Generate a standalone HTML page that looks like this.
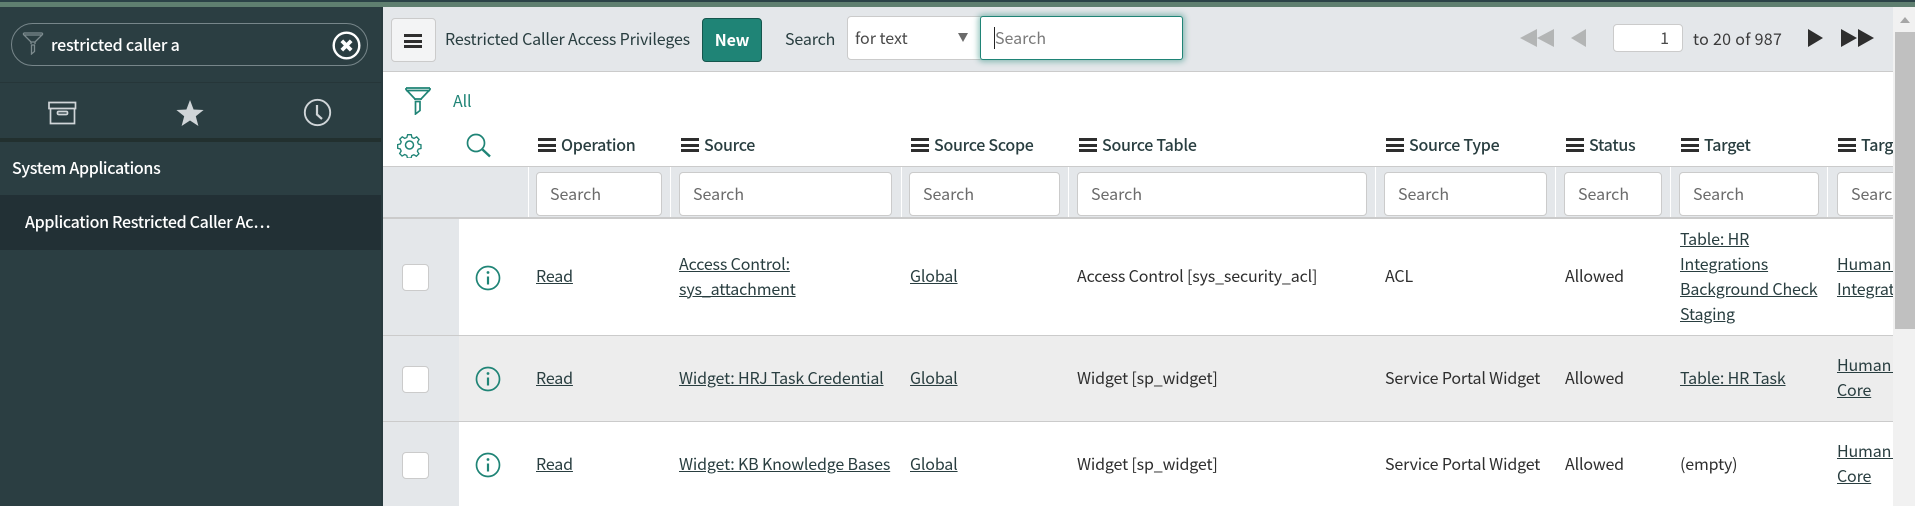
<!DOCTYPE html>
<html><head><meta charset="utf-8"><title>Restricted Caller Access Privileges</title>
<style>
html,body{margin:0;padding:0;width:1915px;height:506px;overflow:hidden;background:#fff}
body{font-family:"Noto Sans CJK JP","Liberation Sans",sans-serif;font-size:16px;color:#2e2e2e;position:relative}
div,span,a,svg{position:absolute;box-sizing:border-box}
.t{white-space:nowrap;line-height:25px;height:25px;letter-spacing:-.15px}
a.t,.t a{color:#293e40;text-decoration:underline}
.h{font-weight:500;color:#293e40;letter-spacing:-.28px}
.n{color:#fff;font-weight:500;letter-spacing:-.32px}
.i{background:#fff;border:1px solid #cbcbcb;border-radius:4px;height:44px;top:172px;color:#6b6b6b;line-height:41px;padding-left:13px;overflow:hidden;white-space:nowrap}
.sep{width:1px;background:#fff;top:167px;height:50px}
.cb{background:#fff;border:1px solid #cbcbcb;border-radius:4px;width:27px;height:27px;left:402px}
.hb{width:18px;height:14px;top:138px;border-top:3px solid #2e2e2e;border-bottom:3px solid #2e2e2e}
.hb:after{content:"";position:absolute;left:0;right:0;top:2.5px;height:3px;background:#2e2e2e}
</style></head><body>
<!-- top bar -->
<div style="left:0;top:0;width:1915px;height:2px;background:#2b4247"></div>
<div style="left:0;top:2px;width:1915px;height:5px;background:#5f7f70"></div>
<!-- nav -->
<div style="left:0;top:7px;width:383px;height:499px;background:#2b3e42"></div>
<div style="left:381px;top:7px;width:2px;height:499px;background:#283a3e"></div>
<div style="left:11px;top:23px;width:357px;height:43px;border:1px solid #77868a;border-radius:22px"></div>
<svg style="left:22px;top:31px" width="23" height="24" viewBox="0 0 23 24" fill="none" stroke="#7d8b8e" stroke-width="1.3"><path d="M1.5 2h19M1.500 2v1.500L9 11h4l7.500-7.500V2M1.500 4h19M9 11v2M13 11v2M9.500 14h3v6.500l-3 2.500z"/></svg>
<span class="t n" style="left:51px;top:32px;letter-spacing:-.2px">restricted caller a</span>
<svg style="left:332px;top:31px" width="29" height="29" viewBox="0 0 29 29" fill="none" stroke="#fff"><circle cx="14.500" cy="14.500" r="12.800" stroke-width="2.400"/><path d="M9.800 9.800l9.400 9.400M19.200 9.800l-9.400 9.400" stroke-width="3.800"/></svg>
<div style="left:0;top:82px;width:381px;height:1px;background:#263639"></div>
<svg style="left:48px;top:101px" width="29" height="24" viewBox="0 0 29 24" fill="none" stroke="#d0d5d8" stroke-width="1.700"><path d="M1 1.500h26.500v6H1zM2.500 7.500v15h24v-15"/><rect x="9.500" y="10.500" width="10" height="3" rx="1.200"/></svg>
<svg style="left:176px;top:99px" width="28" height="28" viewBox="0 0 28 28" fill="#d0d5d8"><path d="M14 1l3.600 9.500 10 .5-7.800 6.300 2.600 9.700-8.400-5.500-8.400 5.500 2.600-9.700L0.400 11l10-.5z"/></svg>
<svg style="left:303px;top:98px" width="29" height="29" viewBox="0 0 29 29" fill="none" stroke="#d0d5d8" stroke-width="1.900"><circle cx="14.500" cy="14.500" r="12.700"/><path d="M14 7v9.500l5 4.500" stroke-width="2.200"/></svg>
<div style="left:0;top:138px;width:381px;height:4px;background:#22302f"></div>
<span class="t n" style="left:12px;top:155px">System Applications</span>
<div style="left:0;top:195px;width:381px;height:55px;background:#223035"></div>
<span class="t n" style="left:25px;top:209px">Application Restricted Caller Ac…</span>
<!-- toolbar -->
<div style="left:383px;top:7px;width:1510px;height:65px;background:#e4e7ea;border-bottom:1px solid #cbcbcb"></div>
<div style="left:391px;top:18px;width:45px;height:44px;background:#f3f4f5;border:1px solid #cbcbcb;border-radius:4px"></div>
<div class="hb" style="left:404px;top:34px"></div>
<span class="t" style="left:445px;top:26px;color:#293e40">Restricted Caller Access Privileges</span>
<div style="left:702px;top:18px;width:60px;height:44px;background:#1f8476;border:1px solid #15564d;border-radius:4px;color:#fff;text-align:center;line-height:41px;font-weight:700;letter-spacing:-.2px">New</div>
<span class="t" style="left:785px;top:26px;color:#293e40">Search</span>
<div style="left:847px;top:16px;width:136px;height:44px;background:#fff;border:1px solid #cbcbcb;border-radius:4px 0 0 4px;line-height:40px;padding-left:7px;color:#4a4a4a">for text</div>
<div style="left:958px;top:33px;width:0;height:0;border-left:5.500px solid transparent;border-right:5.500px solid transparent;border-top:9px solid #6b6b6b"></div>
<div style="left:980px;top:16px;width:203px;height:44px;background:#fff;border:1px solid #1f8476;border-radius:3px;box-shadow:0 0 6px 2px rgba(31,132,118,.45);line-height:41px;padding-left:14px;color:#7a7a7a">Search</div>
<div style="left:994px;top:27px;width:1px;height:22px;background:#222"></div>
<svg style="left:1520px;top:28px" width="35" height="20" fill="#b3b5b5"><path d="M0 10L17 1v18zM17 10L34 1v18z"/></svg>
<svg style="left:1570px;top:28px" width="17" height="20" fill="#b3b5b5"><path d="M1 10L16 1v18z"/></svg>
<div style="left:1613px;top:24px;width:70px;height:28px;background:#fff;border:1px solid #cbcbcb;border-radius:4px;text-align:right;padding-right:13px;line-height:25px;color:#4a4a4a">1</div>
<span class="t" style="left:1693px;top:26px;color:#3a3a3a;letter-spacing:.3px">to 20 of 987</span>
<svg style="left:1807px;top:28px" width="17" height="20" fill="#2e2e2e"><path d="M16 10L1 1v18z"/></svg>
<svg style="left:1840px;top:28px" width="35" height="20" fill="#2e2e2e"><path d="M34 10L18 1v18zM17 10L1 1v18z"/></svg>
<!-- scrollbar -->
<div style="left:1893px;top:7px;width:22px;height:499px;background:#f1f1f1"></div>
<div style="left:1895px;top:32px;width:20px;height:297px;background:#c0c0c0"></div>
<div style="left:1900px;top:17px;width:0;height:0;border-left:5.500px solid transparent;border-right:5.500px solid transparent;border-bottom:6px solid #a6a6a6"></div>
<!-- filter row -->
<svg style="left:404px;top:86px" width="28" height="29" viewBox="0 0 28 29" fill="none" stroke="#1f8476" stroke-width="1.700"><path d="M2 2h24M2 2v1.500L11 13h6l9-9.500V2M2 4.500h24M11 13v1M17 13v1M11.500 15.500h4.500v9l-4.500 3.500z"/></svg>
<span class="t" style="left:453px;top:88px;color:#1f8476">All</span>
<svg style="left:397px;top:132px" width="25" height="26" viewBox="0 0 25 26" fill="none" stroke="#1f8476" stroke-width="1.500"><circle cx="12.500" cy="13" r="4"/><path d="M10.500 1.500h4l.8 3.200 2.300 1 2.900-1.700 2.700 2.900-1.700 2.800 1 2.300 2.800.8v4l-3 .8-1 2.300 1.700 2.900-2.800 2.700-2.800-1.700-2.300 1-.8 2.700h-4l-.8-2.900-2.300-1-2.900 1.700-2.700-2.800 1.700-2.800-1-2.300-2.900-.8v-4l3-.8 1-2.300-1.700-2.900 2.800-2.700 2.800 1.700 2.300-1z" transform="translate(1.200 1.300) scale(.9)"/></svg>
<svg style="left:466px;top:133px" width="26" height="26" viewBox="0 0 26 26" fill="none" stroke="#1f8476"><circle cx="10" cy="10" r="8.500" stroke-width="1.700"/><path d="M16.500 16.500l7.500 7" stroke-width="2.400"/></svg>
<!-- headers -->
<div class="hb" style="left:538px"></div><span class="t h" style="left:561px;top:132px">Operation</span>
<div class="hb" style="left:681px"></div><span class="t h" style="left:704px;top:132px">Source</span>
<div class="hb" style="left:911px"></div><span class="t h" style="left:934px;top:132px">Source Scope</span>
<div class="hb" style="left:1079px"></div><span class="t h" style="left:1102px;top:132px">Source Table</span>
<div class="hb" style="left:1386px"></div><span class="t h" style="left:1409px;top:132px">Source Type</span>
<div class="hb" style="left:1566px"></div><span class="t h" style="left:1589px;top:132px">Status</span>
<div class="hb" style="left:1681px"></div><span class="t h" style="left:1704px;top:132px">Target</span>
<div style="left:1838px;top:125px;width:55px;height:40px;overflow:hidden"><div class="hb" style="left:0;top:13px"></div><span class="t h" style="left:23px;top:7px">Target</span></div>
<!-- search row -->
<div style="left:383px;top:166px;width:1510px;height:53px;background:#e4e7ea;border-top:1px solid #cbcbcb;border-bottom:2px solid #cbcbcb"></div>
<div class="sep" style="left:528px"></div><div class="sep" style="left:670px"></div><div class="sep" style="left:901px"></div><div class="sep" style="left:1068px"></div><div class="sep" style="left:1375px"></div><div class="sep" style="left:1555px"></div><div class="sep" style="left:1670px"></div><div class="sep" style="left:1827px"></div>
<div class="i" style="left:536px;width:126px">Search</div>
<div class="i" style="left:679px;width:213px">Search</div>
<div class="i" style="left:909px;width:151px">Search</div>
<div class="i" style="left:1077px;width:290px">Search</div>
<div class="i" style="left:1384px;width:163px">Search</div>
<div class="i" style="left:1564px;width:98px">Search</div>
<div class="i" style="left:1679px;width:140px">Search</div>
<div class="i" style="left:1837px;width:70px">Search</div>
<div style="left:1893px;top:166px;width:2px;height:53px;background:#f1f1f1"></div>
<div style="left:1895px;top:166px;width:20px;height:53px;background:#c0c0c0"></div>
<!-- rows -->
<div style="left:383px;top:219px;width:76px;height:287px;background:#e4e7ea"></div>
<div style="left:459px;top:336px;width:1434px;height:85px;background:#ededed"></div>
<div style="left:383px;top:335px;width:1510px;height:1px;background:#cbcbcb"></div>
<div style="left:383px;top:421px;width:1510px;height:1px;background:#cbcbcb"></div>
<div class="cb" style="top:264px"></div><div class="cb" style="top:366px"></div><div class="cb" style="top:452px"></div>
<svg style="left:475px;top:265px" width="26" height="26" viewBox="0 0 26 26" fill="none" stroke="#1f8476"><circle cx="13" cy="13" r="11.500" stroke-width="1.700"/><path d="M13 11.500v8" stroke-width="2.200"/><circle cx="13" cy="7.500" r="1.400" fill="#1f8476" stroke="none"/></svg>
<svg style="left:475px;top:366px" width="26" height="26" viewBox="0 0 26 26" fill="none" stroke="#1f8476"><circle cx="13" cy="13" r="11.500" stroke-width="1.700"/><path d="M13 11.500v8" stroke-width="2.200"/><circle cx="13" cy="7.500" r="1.400" fill="#1f8476" stroke="none"/></svg>
<svg style="left:475px;top:452px" width="26" height="26" viewBox="0 0 26 26" fill="none" stroke="#1f8476"><circle cx="13" cy="13" r="11.500" stroke-width="1.700"/><path d="M13 11.500v8" stroke-width="2.200"/><circle cx="13" cy="7.500" r="1.400" fill="#1f8476" stroke="none"/></svg>
<a class="t" style="left:536px;top:263px">Read</a>
<a class="t" style="left:679px;top:251px">Access Control:</a>
<a class="t" style="left:679px;top:276px">sys_attachment</a>
<a class="t" style="left:910px;top:263px">Global</a>
<span class="t" style="left:1077px;top:263px">Access Control [sys_security_acl]</span>
<span class="t" style="left:1385px;top:263px">ACL</span>
<span class="t" style="left:1565px;top:263px">Allowed</span>
<a class="t" style="left:1680px;top:226px">Table: HR</a>
<a class="t" style="left:1680px;top:251px">Integrations</a>
<a class="t" style="left:1680px;top:276px">Background Check</a>
<a class="t" style="left:1680px;top:301px">Staging</a>
<a class="t" style="left:536px;top:365px">Read</a>
<a class="t" style="left:679px;top:365px">Widget: HRJ Task Credential</a>
<a class="t" style="left:910px;top:365px">Global</a>
<span class="t" style="left:1077px;top:365px">Widget [sp_widget]</span>
<span class="t" style="left:1385px;top:365px">Service Portal Widget</span>
<span class="t" style="left:1565px;top:365px">Allowed</span>
<a class="t" style="left:1680px;top:365px">Table: HR Task</a>
<a class="t" style="left:536px;top:451px">Read</a>
<a class="t" style="left:679px;top:451px">Widget: KB Knowledge Bases</a>
<a class="t" style="left:910px;top:451px">Global</a>
<span class="t" style="left:1077px;top:451px">Widget [sp_widget]</span>
<span class="t" style="left:1385px;top:451px">Service Portal Widget</span>
<span class="t" style="left:1565px;top:451px">Allowed</span>
<span class="t" style="left:1680px;top:451px">(empty)</span>
<div style="left:1837px;top:219px;width:56px;height:287px;overflow:hidden">
<a class="t" style="left:0;top:32px">Human Resources</a>
<a class="t" style="left:0;top:57px">Integrations</a>
<a class="t" style="left:0;top:133px">Human Resources</a>
<a class="t" style="left:0;top:158px">Core</a>
<a class="t" style="left:0;top:219px">Human Resources</a>
<a class="t" style="left:0;top:244px">Core</a>
</div>
</body></html>
